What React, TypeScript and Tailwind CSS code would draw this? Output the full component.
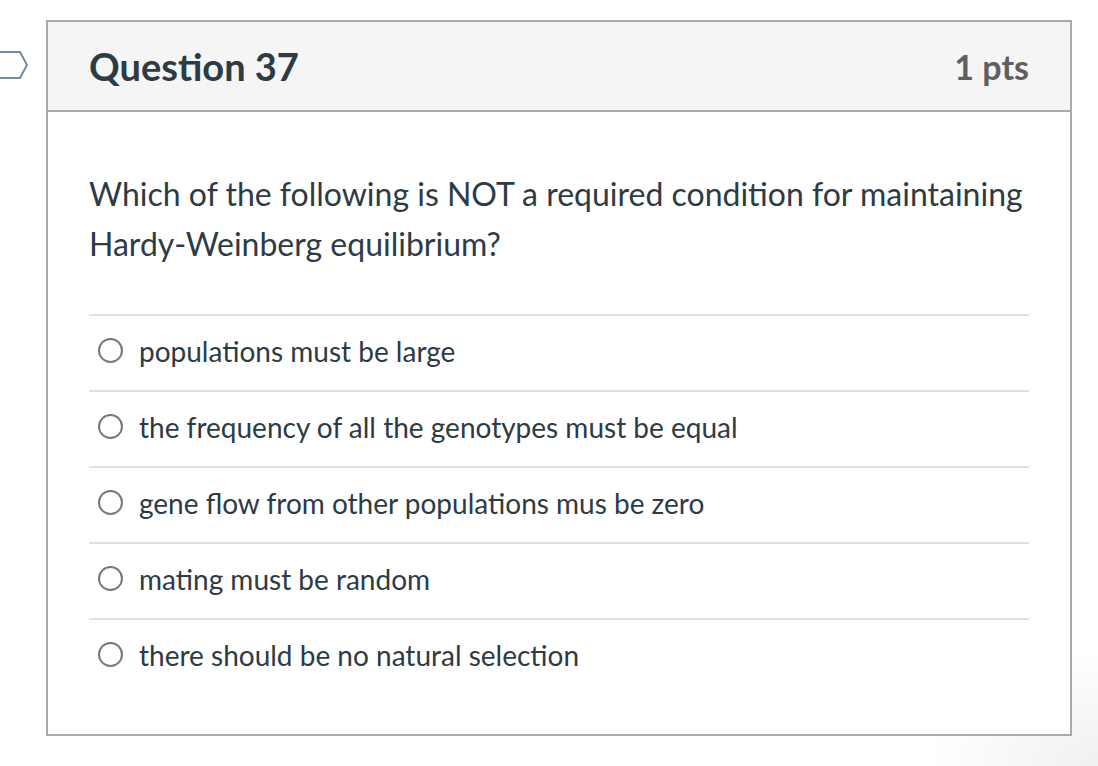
import React from 'react';

const answers = [
  'populations must be large',
  'the frequency of all the genotypes must be equal',
  'gene flow from other populations mus be zero',
  'mating must be random',
  'there should be no natural selection',
];

const Radio: React.FC = () => (
  <span className="w-[25px] h-[25px] rounded-full border-2 border-[#777777] bg-white shrink-0" />
);

export default function App() {
  return (
    <div
      className="relative w-[1098px] h-[766px] bg-white bg-[radial-gradient(ellipse_at_100%_100%,#f0f0f0_0,#ffffff_170px)] overflow-hidden"
      style={{ fontFamily: 'Lato, "Noto Sans", sans-serif' }}
    >
      {/* flag marker, cut off at the left edge */}
      <svg className="absolute left-0 top-[50px]" width="30" height="30" viewBox="0 0 30 30">
        <path d="M-10 2 H20 L27 15 L20 28 H-10" fill="white" stroke="#6f8ca6" strokeWidth="2" />
      </svg>

      <div className="absolute left-[46px] top-[20px] w-[1026px] h-[716px] bg-white border-2 border-[#aaaaaa] flex flex-col">
        <div className="h-[90px] bg-[#f5f5f5] border-b-2 border-[#aaaaaa] flex items-center justify-between px-[41px]">
          <h2 className="text-[38px] font-bold text-[#2d3b45]">Question 37</h2>
          <span className="text-[34px] font-bold text-[#5f5f5f]">1 pts</span>
        </div>

        <div className="px-[41px] pt-[57px]">
          <p className="text-[32px] leading-[50px] text-[#2d3b45]">
            Which of the following is NOT a required condition for maintaining Hardy-Weinberg equilibrium?
          </p>

          <div className="mt-[45px]">
            {answers.map((a) => (
              <div key={a} className="h-[76px] border-t-2 border-[#e0e0e0] flex items-center gap-[16px] pl-[9px] pb-[5px]">
                <Radio />
                <span className="text-[28px] text-[#2d3b45]">{a}</span>
              </div>
            ))}
          </div>
        </div>
      </div>
    </div>
  );
}
